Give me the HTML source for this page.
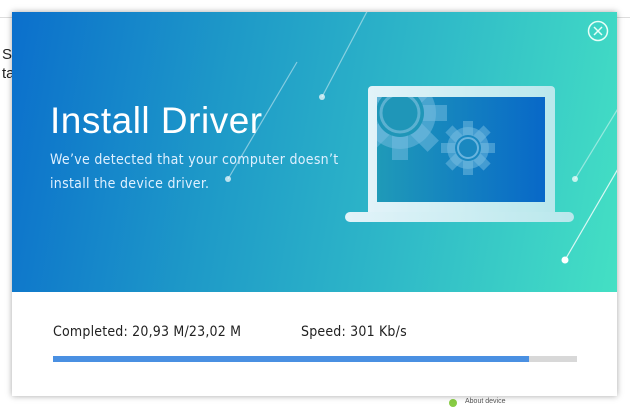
<!DOCTYPE html>
<html><head><style>
body{margin:0;width:630px;height:408px;background:#fff;position:relative;overflow:hidden;font-family:"Liberation Sans",sans-serif}
.bgt{position:absolute;left:2px;font-size:15px;color:#222}
.dlg{position:absolute;left:12px;top:12px;width:605px;height:384px;background:#fff;box-shadow:0 0 6px rgba(0,0,0,.35)}
.hero{position:absolute;left:0;top:0;width:605px;height:280px;background:linear-gradient(100deg,#0b6fcc 0%,#1e9ac8 35%,#2fb9c8 65%,#44e0c4 100%);overflow:hidden}
h1{position:absolute;left:38px;top:88px;margin:0;font-weight:normal;font-size:37px;color:#fff;letter-spacing:.5px}
p{position:absolute;left:38px;top:136px;margin:0;font-family:"DejaVu Sans Condensed","DejaVu Sans",sans-serif;font-size:14px;line-height:24px;color:#dff0ff;letter-spacing:.3px}
.info{position:absolute;top:312px;font-size:14px;color:#222;font-family:"DejaVu Sans Condensed","DejaVu Sans",sans-serif;letter-spacing:.2px}
.bar{position:absolute;left:41px;top:344px;width:524px;height:6px;background:#d8d8d8}
.fill{width:476px;height:6px;background:#4a90e2}
</style></head><body>
<div class="bgt" style="top:46px">S</div><div class="bgt" style="top:65px">ta</div>
<div style="position:absolute;left:0;top:17px;width:630px;height:1px;background:#ddd"></div>
<div style="position:absolute;left:465px;top:398px;font-size:7px;color:#555">About device</div>
<div style="position:absolute;left:449px;top:399px;width:8px;height:8px;border-radius:50%;background:#8c4"></div>
<div class="dlg">
<div class="hero">
<svg width="605" height="280" style="position:absolute;left:0;top:0">
<g stroke="rgba(255,255,255,.45)" stroke-width="1.2" fill="rgba(255,255,255,.7)">
<line x1="310" y1="85" x2="360" y2="-10"/><circle cx="310" cy="85" r="3" stroke="none"/>
<line x1="216" y1="167" x2="285" y2="50"/><circle cx="216" cy="167" r="3" stroke="none"/>
<line x1="563" y1="167" x2="610" y2="90"/><circle cx="563" cy="167" r="3" stroke="none"/>
<line x1="553" y1="248" x2="610" y2="150" stroke="rgba(255,255,255,.8)"/><circle cx="553" cy="248" r="3.5" fill="#fff" stroke="none"/>
</g>
<defs><linearGradient id="lg" x1="0" x2="1"><stop offset="0" stop-color="#e2f3f9"/><stop offset="1" stop-color="#b9e8ec"/></linearGradient>
<linearGradient id="sg" x1="0" x2="1"><stop offset="0" stop-color="#1f9ab8"/><stop offset="1" stop-color="#0868c8"/></linearGradient>
<clipPath id="sc"><rect x="365" y="85" width="168" height="105"/></clipPath></defs>
<rect x="356" y="74" width="187" height="130" rx="4" fill="url(#lg)"/>
<rect x="365" y="85" width="168" height="105" fill="url(#sg)"/>
<g clip-path="url(#sc)" fill="rgba(120,190,225,.5)">
<g transform="translate(388,101)">
<circle r="36"/>
<g><rect x="-8" y="-47" width="16" height="94"/><rect x="-8" y="-47" width="16" height="94" transform="rotate(45)"/><rect x="-8" y="-47" width="16" height="94" transform="rotate(90)"/><rect x="-8" y="-47" width="16" height="94" transform="rotate(135)"/></g>
<circle r="24" fill="#1f96b8"/>
<circle r="19" fill="none" stroke="rgba(140,200,230,.55)" stroke-width="3"/>
</g>
<g transform="translate(456,136)">
<circle r="21"/>
<g><rect x="-5" y="-27" width="10" height="54"/><rect x="-5" y="-27" width="10" height="54" transform="rotate(45)"/><rect x="-5" y="-27" width="10" height="54" transform="rotate(90)"/><rect x="-5" y="-27" width="10" height="54" transform="rotate(135)"/></g>
<circle r="13" fill="#1a88c0"/>
<circle r="10" fill="none" stroke="rgba(140,200,235,.7)" stroke-width="2"/>
</g></g>
<rect x="333" y="200" width="229" height="10" rx="5" fill="url(#lg)"/>
<circle cx="586" cy="19" r="9.5" fill="none" stroke="#e8fff8" stroke-width="1.5"/>
<path d="M582 15l8 8M590 15l-8 8" stroke="#e8fff8" stroke-width="1.5"/>
</svg>
<h1>Install Driver</h1>
<p>We’ve detected that your computer doesn’t<br>install the device driver.</p>
</div>
<div class="info" style="left:41px">Completed: 20,93 M/23,02 M</div>
<div class="info" style="left:289px">Speed: 301 Kb/s</div>
<div class="bar"><div class="fill"></div></div>
</div>
</body></html>
